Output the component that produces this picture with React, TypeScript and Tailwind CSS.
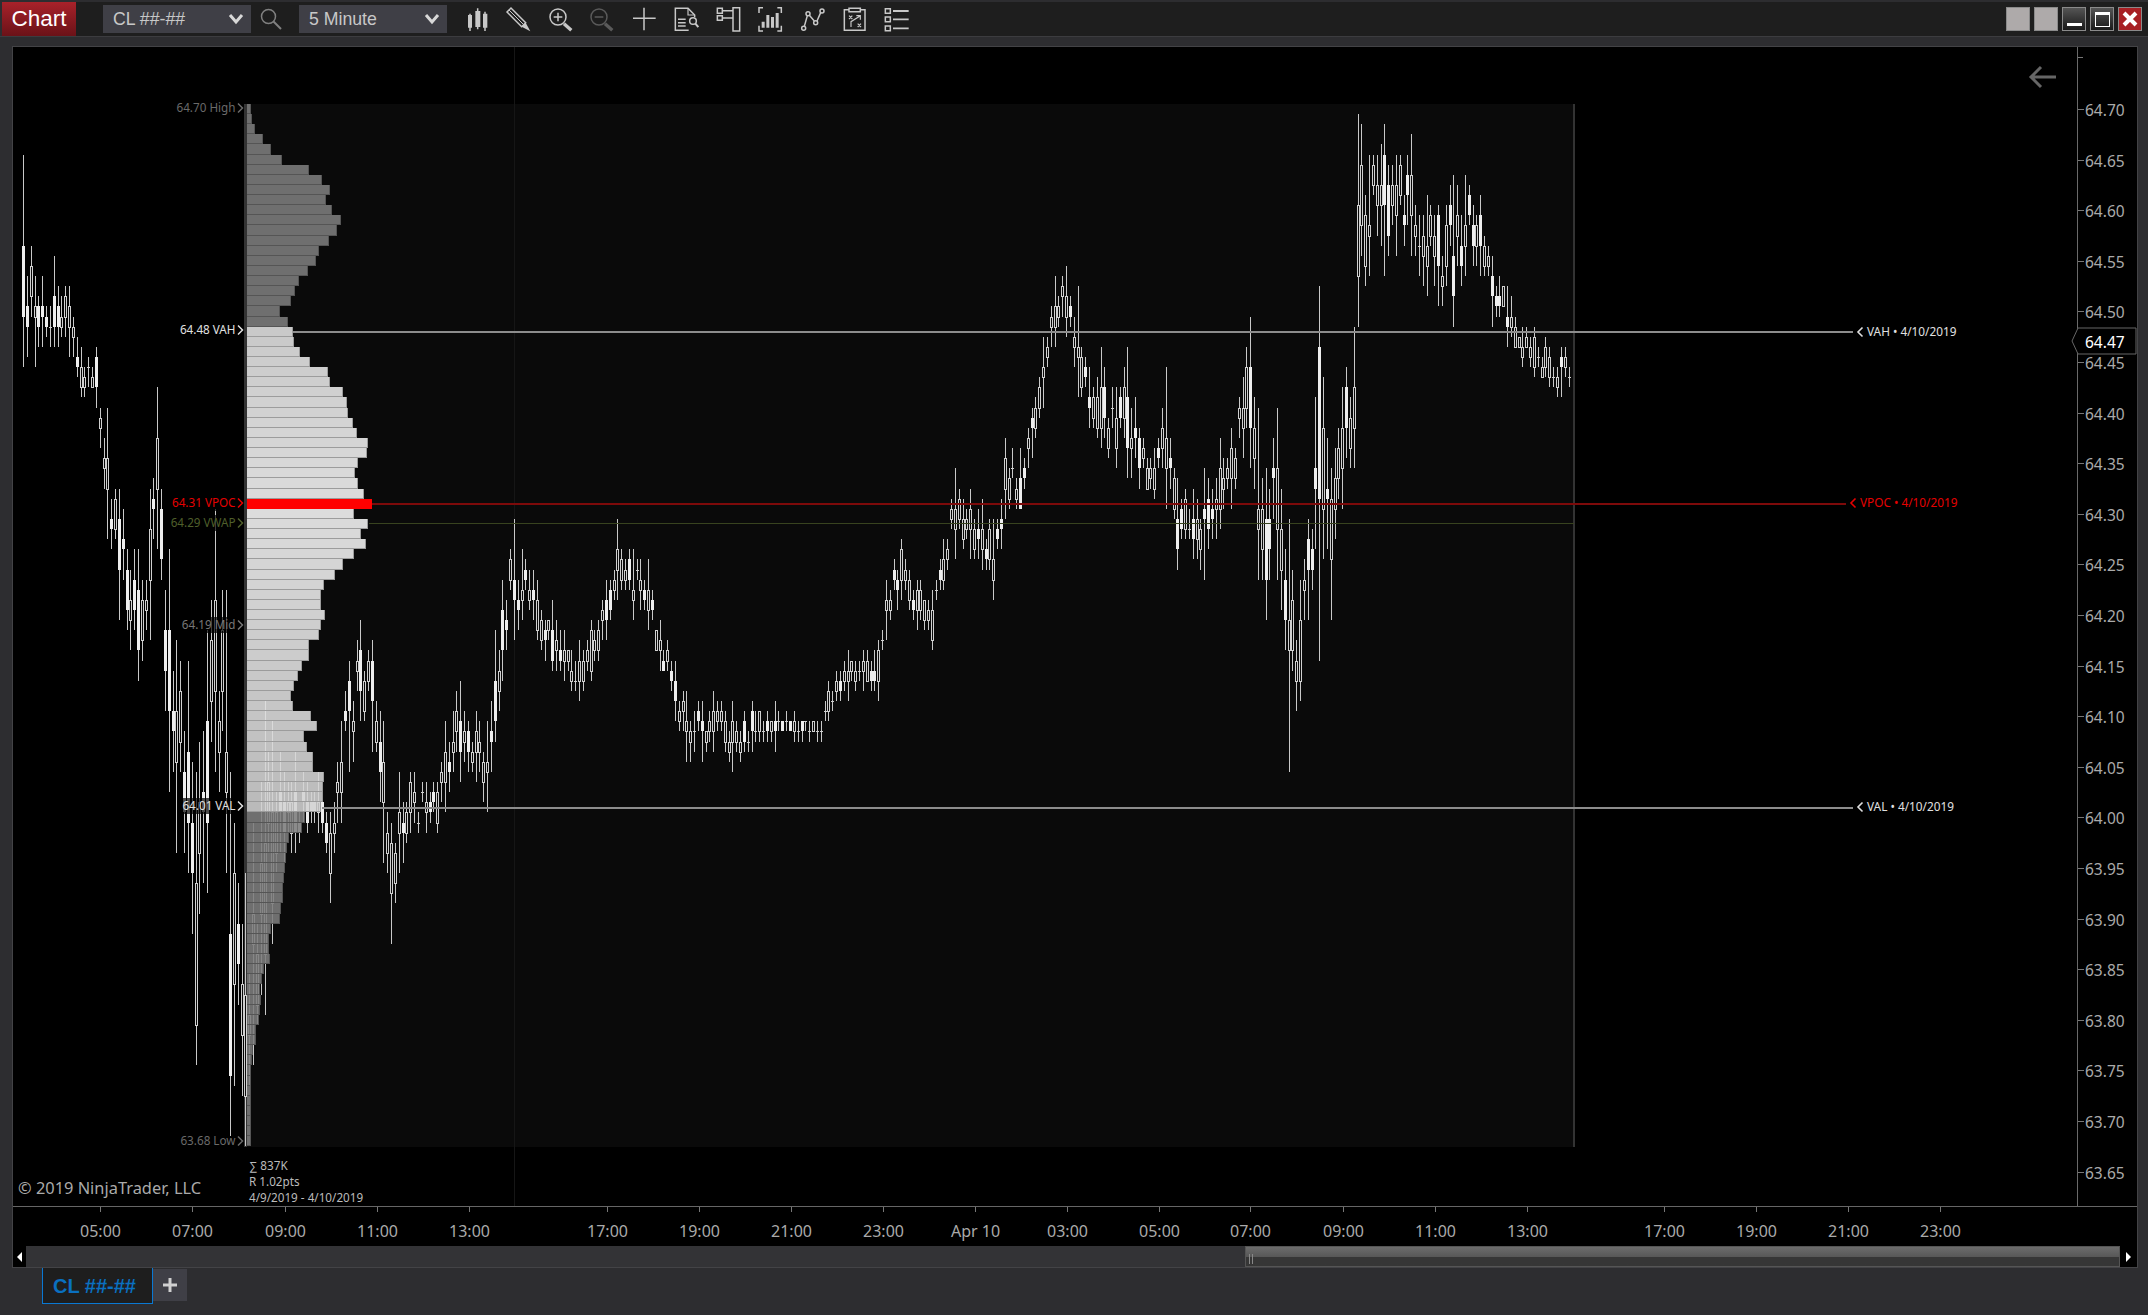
import { type FC, type ReactNode } from "react";

const SCALE = 2148 / 1568;
const ROW = 10.12;
const PROFILE_X = 247;
const PROFILE_TOP = 104;
const PROFILE_BOTTOM = 1147;

// high/low envelope of the price path: x, top, bottom in 1568-wide coordinates
const ENV: number[][] = [
  [17, 110, 270], [24, 200, 270], [31, 205, 255], [38, 190, 255], [50, 210, 260], [60, 250, 290], [70, 255, 300],
  [78, 300, 390], [88, 360, 450], [100, 400, 500], [108, 360, 470], [116, 280, 400], [122, 400, 580], [130, 470, 620],
  [137, 480, 640], [143, 560, 775], [150, 460, 650], [158, 375, 560], [165, 430, 640], [169, 560, 826], [172, 600, 790],
  [179, 640, 835], [185, 600, 780], [192, 510, 740], [200, 530, 690], [208, 560, 640], [216, 550, 620], [224, 570, 610],
  [232, 560, 610], [240, 590, 660], [248, 530, 600], [256, 480, 560], [264, 450, 530], [272, 465, 550], [280, 530, 630],
  [286, 600, 690], [292, 560, 640], [300, 560, 610], [310, 570, 610], [318, 570, 610], [326, 530, 590], [336, 495, 570],
  [346, 520, 570], [356, 530, 590], [362, 460, 545], [368, 420, 500], [374, 382, 470], [382, 400, 450], [392, 420, 470],
  [402, 440, 490], [412, 460, 500], [422, 470, 515], [432, 450, 500], [442, 425, 470], [452, 382, 440], [462, 400, 450],
  [472, 410, 460], [482, 450, 490], [492, 480, 530], [502, 505, 555], [512, 510, 558], [522, 505, 550], [535, 510, 560],
  [550, 515, 550], [565, 515, 550], [580, 520, 545], [598, 525, 540], [606, 495, 530], [618, 475, 510], [630, 475, 505],
  [640, 470, 515], [648, 420, 470], [658, 395, 440], [668, 420, 460], [680, 430, 478], [688, 390, 430], [698, 345, 405],
  [708, 355, 410], [718, 365, 415], [726, 380, 435], [734, 320, 380], [744, 330, 375], [752, 295, 335], [762, 245, 300],
  [770, 200, 250], [778, 197, 245], [786, 210, 290], [794, 265, 315], [804, 255, 330], [814, 280, 345], [822, 250, 350],
  [832, 310, 355], [842, 330, 365], [852, 270, 370], [860, 350, 415], [870, 360, 408], [880, 345, 420], [890, 320, 385],
  [900, 315, 370], [912, 230, 340], [918, 300, 425], [924, 340, 455], [932, 300, 420], [940, 380, 560], [948, 420, 510],
  [956, 380, 450], [964, 210, 480], [972, 340, 450], [980, 280, 370], [988, 240, 340], [992, 80, 240], [1000, 110, 200],
  [1010, 88, 205], [1020, 110, 190], [1030, 100, 190], [1040, 140, 215], [1050, 150, 225], [1060, 130, 240],
  [1070, 130, 200], [1080, 140, 200], [1090, 190, 235], [1100, 210, 250], [1110, 240, 270], [1120, 240, 275],
  [1130, 250, 285], [1140, 250, 293], [1148, 245, 280],
];

// right edge of every volume row, top to bottom
const PROFILE = [
  4, 5, 8, 16, 24, 35, 62, 75, 83, 79, 85, 94, 90, 82, 72, 69, 61, 52, 48, 44, 33, 41,
  46, 47, 53, 63, 81, 83, 96, 100, 101, 106, 110, 121, 120, 111, 108, 111, 117, 125, 107, 121, 114, 119, 107, 96, 88,
  77, 74, 74, 78, 74, 72, 62, 62, 55, 51, 47, 44, 46, 64, 70, 57, 60, 66, 66, 77, 76, 76, 74,
  58, 55, 42, 40, 39, 38, 37, 36, 36, 34, 33, 24, 22, 22, 23, 17, 15, 13, 14, 13, 12, 9, 9, 6, 5, 4, 4, 4, 4, 4, 4, 4, 4,
];

const TIME_LABELS: [string, number][] = [
  ["05:00", 100], ["07:00", 192], ["09:00", 285], ["11:00", 377], ["13:00", 469], ["17:00", 607], ["19:00", 699],
  ["21:00", 791], ["23:00", 883], ["Apr 10", 975], ["03:00", 1067], ["05:00", 1159], ["07:00", 1250], ["09:00", 1343],
  ["11:00", 1435], ["13:00", 1527], ["17:00", 1664], ["19:00", 1756], ["21:00", 1848], ["23:00", 1940],
];

const PRICES = Array.from({ length: 22 }, (_, i) => ({
  label: (64.7 - i * 0.05).toFixed(2),
  y: 109 + i * 50.6,
}));

type Candle = { x: number; hi: number; lo: number; top: number; bot: number; solid: boolean };

const buildCandles = (): Candle[] => {
  let seed = 48271;
  const rnd = () => {
    seed = (seed * 16807) % 2147483647;
    return seed / 2147483647;
  };
  const snap = (y: number) => Math.round(PROFILE_TOP + Math.round((y - PROFILE_TOP) / ROW) * ROW);
  const out: Candle[] = [];
  for (let cx = 23; cx < 1572; cx += 3.835) {
    const sx = cx / SCALE;
    let k = ENV.findIndex((e) => e[0] >= sx);
    if (k < 1) k = k === 0 ? 1 : ENV.length - 1;
    const [x0, t0, b0] = ENV[k - 1];
    const [x1, t1, b1] = ENV[k];
    const f = Math.min(1, (sx - x0) / (x1 - x0));
    const t = (t0 + (t1 - t0) * f) * SCALE;
    const b = (b0 + (b1 - b0) * f) * SCALE;
    const range = b - t;
    const half = range * (0.18 + rnd() * 0.17);
    let mid = t + half + rnd() * (range - 2 * half);
    let hi = mid - half;
    let lo = mid + half;
    // the candle closest to a waypoint reaches that waypoint's extremes
    const hit = Math.abs(sx - x1) < 1.4 ? [t1, b1] : Math.abs(sx - x0) < 1.4 ? [t0, b0] : null;
    if (hit) {
      hi = hit[0] * SCALE;
      lo = hit[1] * SCALE;
      mid = (hi + lo) / 2 + (rnd() - 0.5) * (lo - hi) * 0.3;
    }
    const bodyHalf = (lo - hi) * (0.06 + rnd() * 0.2);
    out.push({
      x: Math.round(cx),
      hi: snap(hi),
      lo: snap(lo),
      top: snap(mid - bodyHalf),
      bot: snap(mid + bodyHalf),
      solid: rnd() < 0.33,
    });
  }
  return out;
};

const CANDLES = buildCandles();

const rowColor = (i: number) => {
  if (i === 39) return "#ff0000";
  if (i < 22 || i >= 70) return "#7e7e7e";
  const v = Math.round(250 - Math.abs(i - 39) * 1.3);
  return `rgb(${v},${v},${v})`;
};

const LeftLabel: FC<{ y: number; text: string; color: string; bg?: number }> = ({ y, text, color, bg = 0 }) => (
  <g>
    {bg > 0 && <rect x={243 - bg} y={y - 8} width={bg} height={16} fill="#000" opacity={0.7} />}
    <text x={235.5} y={y + 4} textAnchor="end" fontSize={11.7} fill={color}>
      {text}
    </text>
    <path d={`M238 ${y - 4.5} L242.5 ${y} L238 ${y + 4.5}`} fill="none" stroke={color} strokeWidth={1.5} />
  </g>
);

const RightLabel: FC<{ x: number; y: number; text: string; color: string }> = ({ x, y, text, color }) => (
  <g>
    <path d={`M${x + 4.5} ${y - 4.5} L${x} ${y} L${x + 4.5} ${y + 4.5}`} fill="none" stroke={color} strokeWidth={1.6} />
    <text x={x + 9} y={y + 4} fontSize={11.8} fill={color}>
      {text}
    </text>
  </g>
);

const ChartDrawing: FC = () => (
  <svg className="absolute inset-0 block h-full w-full" viewBox="13 47 2064 1159">
    <rect x={PROFILE_X} y={PROFILE_TOP} width={1327} height={PROFILE_BOTTOM - PROFILE_TOP} fill="#0a0a0a" />
    <rect x={514} y={47} width={1} height={1159} fill="#161616" />
    <rect x={1573} y={PROFILE_TOP} width={2} height={PROFILE_BOTTOM - PROFILE_TOP} fill="#333" />
    <rect x={244} y={PROFILE_TOP} width={3} height={PROFILE_BOTTOM - PROFILE_TOP} fill="#333" />

    {CANDLES.map((c, i) => (
      <g key={i}>
        <rect x={c.x} y={c.hi} width={1} height={Math.max(1, c.lo - c.hi)} fill="#c8c8c8" />
        {c.bot - c.top < 2 ? (
          <rect x={c.x - 1} y={c.top} width={3} height={1} fill="#d0d0d0" />
        ) : c.solid ? (
          <rect x={c.x - 1} y={c.top} width={3} height={c.bot - c.top} fill="#eeeeee" />
        ) : (
          <rect x={c.x - 0.5} y={c.top + 0.5} width={2} height={c.bot - c.top} fill="#0a0a0a" stroke="#d0d0d0" />
        )}
      </g>
    ))}

    <g opacity={0.88}>
      {PROFILE.map((w, i) => {
        const y = Math.round(PROFILE_TOP + i * ROW);
        const next = Math.round(PROFILE_TOP + (i + 1) * ROW);
        return <rect key={i} x={PROFILE_X} y={y} width={w} height={next - y} fill={rowColor(i)} />;
      })}
    </g>
    {PROFILE.map((w, i) => {
      if (i === 39) return null;
      const y = Math.round(PROFILE_TOP + i * ROW);
      const next = Math.round(PROFILE_TOP + (i + 1) * ROW);
      const sep = i < 22 || i >= 70 ? "#555555" : "#9c9c9c";
      return (
        <g key={i}>
          <rect x={PROFILE_X} y={next - 1} width={w} height={1} fill={sep} />
          <rect x={PROFILE_X + w - 1} y={y} width={1} height={next - y} fill={sep} />
        </g>
      );
    })}
    <rect x={PROFILE_X} y={499} width={125} height={10} fill="#ff0000" />

    <rect x={293} y={331} width={1560} height={2} fill="#8c8c8c" />
    <rect x={322} y={807} width={1531} height={2} fill="#8c8c8c" />
    <rect x={372} y={503} width={1474} height={2} fill="#7d0a0a" />
    <rect x={369} y={523} width={1205} height={1} fill="#38431f" />

    <LeftLabel y={108} text="64.70 High" color="#6a6a6a" />
    <LeftLabel y={330} text="64.48 VAH" color="#e0e0e0" />
    <LeftLabel y={503} text="64.31 VPOC" color="#e60000" bg={56} />
    <LeftLabel y={523} text="64.29 VWAP" color="#4f5f2b" bg={58} />
    <LeftLabel y={625} text="64.19 Mid" color="#777777" bg={62} />
    <LeftLabel y={806} text="64.01 VAL" color="#e0e0e0" bg={62} />
    <LeftLabel y={1141} text="63.68 Low" color="#6a6a6a" />

    <RightLabel x={1858} y={332} text="VAH • 4/10/2019" color="#e0e0e0" />
    <RightLabel x={1851} y={503} text="VPOC • 4/10/2019" color="#e60000" />
    <RightLabel x={1858} y={807} text="VAL • 4/10/2019" color="#e0e0e0" />

    <path d="M2056 77 H2031 M2041 67 L2031 77 L2041 87" fill="none" stroke="#666" strokeWidth={3} />

    <text x={18} y={1194} fontSize={16.4} fill="#aaaaaa">
      © 2019 NinjaTrader, LLC
    </text>
    <text x={249} y={1170} fontSize={11.7} fill="#bbbbbb">
      ∑ 837K
    </text>
    <text x={249} y={1186} fontSize={11.7} fill="#bbbbbb">
      R 1.02pts
    </text>
    <text x={249} y={1202} fontSize={11.7} fill="#bbbbbb">
      4/9/2019 - 4/10/2019
    </text>
  </svg>
);

const PriceAxis: FC = () => (
  <div className="relative w-[60px] border-l border-[#6a6a6a] bg-black">
    <div className="absolute left-0 top-[10px] h-px w-[5px] bg-[#777]" />
    {PRICES.map((p) => (
      <div key={p.label}>
        <div className="absolute left-0 h-px w-[6px] bg-[#777]" style={{ top: p.y - 47 }} />
        <span
          className="absolute left-[7px] -translate-y-1/2 text-[15.5px] leading-none text-[#aaaaaa]"
          style={{ top: p.y - 45 }}
        >
          {p.label}
        </span>
      </div>
    ))}
    <svg className="absolute left-[-8px] top-[280px]" width={67} height={28} viewBox="0 0 67 28">
      <path d="M66 1 H8 L2 14 L8 27 H66 Z" fill="#000" stroke="#666" />
    </svg>
    <span className="absolute left-[7px] top-[296px] -translate-y-1/2 text-[15.5px] leading-none text-white">64.47</span>
  </div>
);

const TimeAxis: FC = () => (
  <div className="relative h-[40px] border-t border-[#666] bg-black">
    {TIME_LABELS.map(([label, x], i) => (
      <div key={i}>
        <div className="absolute top-0 h-[5px] w-px bg-[#777]" style={{ left: x - 13 }} />
        <span
          className="absolute top-[14px] -translate-x-1/2 text-[16px] leading-[20px] text-[#aaaaaa]"
          style={{ left: x - 12.5 }}
        >
          {label}
        </span>
      </div>
    ))}
  </div>
);

const ScrollRow: FC = () => (
  <div className="flex h-[21px] bg-[#333336]">
    <div className="flex w-[13px] items-center justify-center bg-black">
      <div className="h-0 w-0 border-y-[5px] border-r-[5px] border-y-transparent border-r-white" />
    </div>
    <div className="flex-1" />
    <div className="relative w-[875px] border border-[#555] bg-gradient-to-b from-[#6c6c6c] via-[#585858] via-50% to-[#363636] to-50%">
      <div className="absolute left-[3px] top-[7px] h-[10px] w-[4px] border-x border-[#888]" />
    </div>
    <div className="flex w-[17px] items-center justify-center bg-black">
      <div className="h-0 w-0 border-y-[5px] border-l-[5px] border-y-transparent border-l-white" />
    </div>
  </div>
);

const Icon: FC<{ children: ReactNode; dim?: boolean }> = ({ children, dim }) => (
  <svg
    width={26}
    height={28}
    viewBox="0 0 78 84"
    fill="none"
    stroke="currentColor"
    strokeWidth={4.5}
    className={dim ? "text-[#5a5a5a]" : "text-[#c8c8c8]"}
  >
    {children}
  </svg>
);

const TOOL_ICONS: { dim?: boolean; body: ReactNode }[] = [
  {
    body: (
      <>
        <path d="M21 26V78M44 10V73M66 20V78" />
        <path d="M15 30H27V68H15ZM37 18H52V66H37ZM60 26H73V68H60Z" fill="currentColor" stroke="none" />
      </>
    ),
  },
  {
    body: (
      <>
        <path d="M6 21L18 9L62 53L50 65Z" />
        <path d="M12 15L56 59" strokeWidth={3} />
        <path d="M62 53L76 79L50 65Z" fill="currentColor" stroke="none" />
      </>
    ),
  },
  {
    body: (
      <>
        <circle cx={33} cy={36} r={24} />
        <path d="M20 36H46M33 23V49" />
        <path d="M51 56L73 76" strokeWidth={10} />
      </>
    ),
  },
  {
    dim: true,
    body: (
      <>
        <circle cx={30} cy={36} r={24} />
        <path d="M17 36H43" />
        <path d="M48 56L70 76" strokeWidth={10} />
      </>
    ),
  },
  { body: <path d="M6 40H74M39 8V76" /> },
  {
    body: (
      <>
        <path d="M47 76H7V10H45L65 30V36" />
        <path d="M45 10V30H65" strokeWidth={3.5} />
        <path d="M15 43H38M15 53H38M15 63H38" />
        <circle cx={60} cy={48} r={10} />
        <path d="M67 56L76 66" strokeWidth={6} />
      </>
    ),
  },
  {
    body: (
      <>
        <path d="M7 10H22V25H7ZM7 32H22V46H7ZM22 17H54M22 39H54M54 8H74V78H54Z" />
      </>
    ),
  },
  {
    body: (
      <>
        <path d="M18 8H6V24M61 8H73V24M18 78H6V62M61 78H73V62" />
        <path d="M14 50H23V68H14ZM28 30H37V68H28ZM42 36H51V68H42ZM56 24H65V68H56Z" fill="currentColor" stroke="none" />
      </>
    ),
  },
  {
    body: (
      <>
        <circle cx={14} cy={70} r={6} />
        <circle cx={27} cy={26} r={6} />
        <circle cx={50} cy={53} r={6} />
        <circle cx={69} cy={18} r={6} />
        <path d="M16 64L25 32M31 31L46 48M54 48L65 23" />
      </>
    ),
  },
  {
    body: (
      <>
        <path d="M24 14H10V76H72V14H58" />
        <path d="M24 10H58V20H24Z" />
        <path d="M24 32L34 42M34 32L24 42M30 66V50L56 34M46 32H58V44M50 56L60 66M60 56L50 66" strokeWidth={3.5} />
      </>
    ),
  },
  {
    body: (
      <>
        <path d="M7 11H22V25H7ZM7 36H22V50H7ZM7 63H22V77H7Z" />
        <path d="M30 18H77M30 43H77M30 70H77" strokeWidth={5.5} />
      </>
    ),
  },
];

const Select: FC<{ label: string }> = ({ label }) => (
  <div className="flex h-7 w-[148px] items-center justify-between bg-[#3f3f46] pl-[10px] pr-[7px] font-['Liberation_Sans',sans-serif] text-[17.7px] text-[#c8c8c8]">
    <span>{label}</span>
    <svg width={16} height={12} viewBox="0 0 16 12" fill="none" stroke="#d8d8d8" strokeWidth={3}>
      <path d="M2 2L8 9L14 2" />
    </svg>
  </div>
);

const WindowButton: FC<{ className: string; children?: ReactNode }> = ({ className, children }) => (
  <div className={`flex h-6 w-6 items-center justify-center border border-[#8a8a8a] ${className}`}>{children}</div>
);

const Toolbar: FC = () => (
  <div className="ml-0.5 flex h-[34px] items-center justify-between bg-[#1e1e1e]">
    <div className="flex h-full items-center">
      <div className="flex h-full w-[74px] items-center justify-center bg-gradient-to-b from-[#a8222a] to-[#6b1218] font-['Liberation_Sans',sans-serif] text-[22.5px] text-white">
        Chart
      </div>
      <div className="ml-[27px]">
        <Select label="CL ##-##" />
      </div>
      <svg className="ml-[9px]" width={22} height={22} viewBox="0 0 22 22" fill="none" stroke="#808080" strokeWidth={1.5}>
        <circle cx={8.5} cy={8.5} r={7} />
        <path d="M13.5 13.5L21 21" strokeWidth={2} />
      </svg>
      <div className="ml-[17px]">
        <Select label="5 Minute" />
      </div>
      <div className="ml-[16px] flex items-center gap-4">
        {TOOL_ICONS.map((icon, i) => (
          <Icon key={i} dim={icon.dim}>
            {icon.body}
          </Icon>
        ))}
      </div>
    </div>
    <div className="flex gap-1 pr-1.5">
      <WindowButton className="bg-[#aeaaaa]" />
      <WindowButton className="bg-[#aeaaaa]" />
      <WindowButton className="items-end bg-gradient-to-b from-[#555] to-[#1a1a1a] pb-1">
        <div className="h-[3px] w-[15px] bg-white" />
      </WindowButton>
      <WindowButton className="bg-gradient-to-b from-[#555] to-[#1a1a1a]">
        <div className="h-[15px] w-[15px] border border-t-[3px] border-white" />
      </WindowButton>
      <WindowButton className="bg-[#a82024]">
        <svg width={16} height={16} viewBox="0 0 16 16" stroke="#fff" strokeWidth={4}>
          <path d="M2 2L14 14M14 2L2 14" />
        </svg>
      </WindowButton>
    </div>
  </div>
);

export default function App() {
  return (
    <div className="flex h-[1315px] w-[2148px] flex-col overflow-hidden bg-[#2d2d30] pt-0.5 font-['Noto_Sans',sans-serif]">
      <Toolbar />
      <div className="h-px bg-[#3c3c3f]" />
      <div className="ml-3 mt-[9px] flex h-[1222px] w-[2126px] flex-col border border-[#434346]">
        <div className="flex h-[1159px]">
          <div className="relative flex-1 bg-black">
            <ChartDrawing />
          </div>
          <PriceAxis />
        </div>
        <TimeAxis />
        <ScrollRow />
      </div>
      <div className="ml-[42px] flex items-start">
        <div className="flex h-9 w-[111px] items-center justify-center border-x border-b border-[#0a78d2] bg-[#1e1e1e] pr-1.5 font-['Liberation_Sans',sans-serif] text-[20px] font-bold text-[#0a70c0]">
          CL ##-##
        </div>
        <div className="mt-px flex h-8 w-[34px] items-center justify-center bg-[#3f3f46]">
          <svg width={16} height={16} viewBox="0 0 16 16" stroke="#d0d0d0" strokeWidth={3}>
            <path d="M1 8H15M8 1V15" />
          </svg>
        </div>
      </div>
    </div>
  );
}
